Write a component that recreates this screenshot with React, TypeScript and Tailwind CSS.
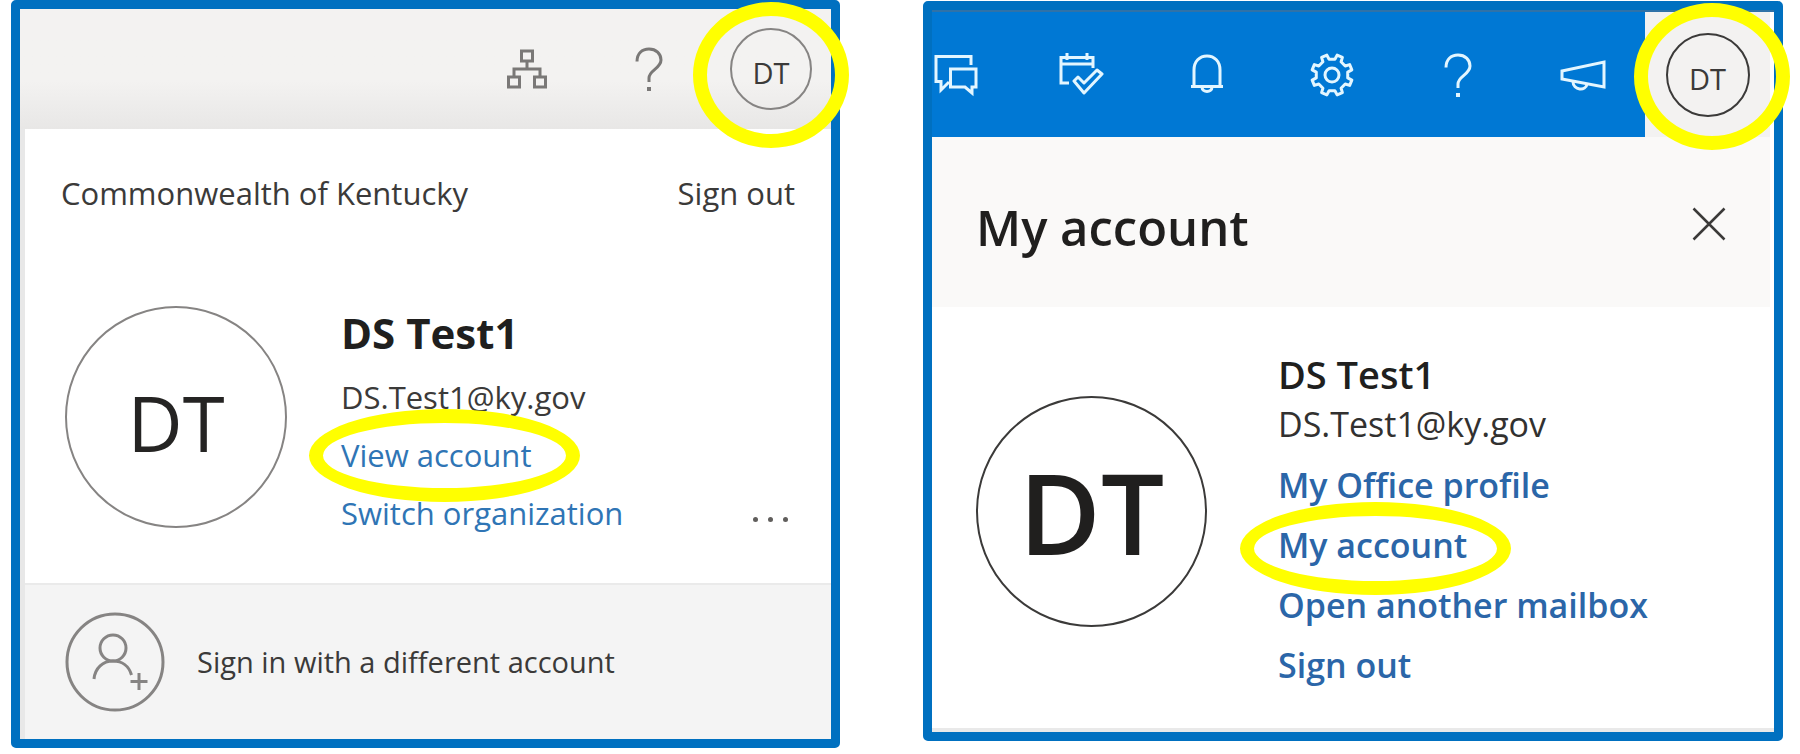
import React from "react";

type IconProps = { children: React.ReactNode; stroke?: string };

function Icon({ children, stroke = "3" }: IconProps) {
  return (
    <svg
      viewBox="0 0 46 46"
      className="size-[46px]"
      fill="none"
      stroke="currentColor"
      strokeWidth={stroke}
      aria-hidden="true"
    >
      {children}
    </svg>
  );
}

function Question() {
  return (
    <Icon>
      <path d="M11 15.500C11 7.500 16 3 23 3S35 7.500 35 14c0 8.500-12 10-12 18v4" />
      <path d="M23 41v4" strokeWidth="4" />
    </Icon>
  );
}

// Outline of an eight-toothed gear centred on (23, 23).
const gearPoints = Array.from({ length: 8 }, (_, tooth) =>
  [
    [-12, 16],
    [-8, 20.5],
    [8, 20.5],
    [12, 16],
  ]
    .map(([offset, radius]) => {
      const angle = ((tooth * 45 + 22.5 + offset) * Math.PI) / 180;
      return `${(23 + radius * Math.cos(angle)).toFixed(2)},${(23 + radius * Math.sin(angle)).toFixed(2)}`;
    })
    .join(" "),
).join(" ");

const toolbar = [
  {
    label: "Chat",
    icon: (
      <Icon>
        <path d="M38 13V4.500H3v25h5V38l8-8" />
        <path d="M17.500 17H43v18h-4v6l-7-6H17.500z" />
      </Icon>
    ),
  },
  {
    label: "Tasks",
    icon: (
      <Icon>
        <path d="M11 31H3V5.500h32V16M3 12h32M9 1v7M29 1v7" />
        <path d="m16 29 4-4 6 6 13-13 5 4-18 19z" strokeLinejoin="round" />
      </Icon>
    ),
  },
  {
    label: "Notifications",
    icon: (
      <Icon>
        <path d="M7 34.500h32M10 34V18C10 9.500 15.500 4 23 4s13 5.500 13 14v16" />
        <path d="M18 35c0 6 10 6 10 0" />
      </Icon>
    ),
  },
  {
    label: "Settings",
    icon: (
      <Icon>
        <circle cx="23" cy="23" r="7" />
        <polygon points={gearPoints} strokeLinejoin="round" />
      </Icon>
    ),
  },
  { label: "Help", icon: <Question /> },
  {
    label: "What's new",
    icon: (
      <Icon>
        <path d="m2 19 42-9v25L2 27z" />
        <path d="M13 29.500c0 9 13 10 14 2.500" />
      </Icon>
    ),
  },
];

const links = ["My Office profile", "My account", "Open another mailbox", "Sign out"];

function Highlight({ className }: { className: string }) {
  return (
    <span
      aria-hidden="true"
      className={`pointer-events-none absolute z-10 rounded-[50%] border-[14px] border-[#ffff00] ${className}`}
    />
  );
}

function OfficePanel() {
  return (
    <section className="min-w-0 rounded-[5px] border-[9px] border-[#0070c0] bg-[#e8e8e8] text-[#3b3a39]">
      <header className="flex h-[120px] items-center justify-end gap-[40px] bg-linear-to-b from-[#f3f2f1] from-60% to-[#e8e7e6] pr-[19px] text-[#7a7877]">
        <button aria-label="Organization" className="flex size-[82px] items-center justify-center">
          <Icon>
            <path d="M17.500 5h11v10h-11zM4.500 31h11v10h-11zM30.500 31h11v10h-11zM23 15v8M10 31v-8h26v8" />
          </Icon>
        </button>
        <button aria-label="Help" className="flex size-[82px] items-center justify-center">
          <Question />
        </button>
        <button
          aria-label="Account DT"
          className="relative flex size-[82px] items-center justify-center rounded-full border-2 border-[#868483] pt-2 text-[29px] leading-[36px] text-[#3b3a39]"
        >
          DT
          <Highlight className="-top-7 -left-[39px] h-[146px] w-[156px]" />
        </button>
      </header>
      <div className="ml-[5px] bg-white pb-[41px]">
        <div className="flex justify-between pt-[44px] pr-[36px] pl-[36px] text-[31px] leading-[40px]">
          <span>Commonwealth of Kentucky</span>
          <button>Sign out</button>
        </div>
        <div className="flex pt-[85px] pr-[43px] pl-[40px]">
          <div className="mt-2 flex size-[222px] shrink-0 items-center justify-center rounded-full border-2 border-[#868483] pt-3 text-[76px] leading-[90px] text-[#252423]">
            DT
          </div>
          <div className="ml-[54px] flex flex-1 flex-col items-start text-[31px] leading-[58px]">
            <h2 className="text-[42px] leading-[70px] font-bold text-[#201f1e]">DS Test1</h2>
            <span>DS.Test1@ky.gov</span>
            <a href="#view-account" className="relative text-[#2f75b5]">
              View account
              <Highlight className="-top-[17px] -left-8 h-[93px] w-[271px]" />
            </a>
            <div className="flex w-full items-center justify-between">
              <a href="#switch-organization" className="text-[#2f75b5]">
                Switch organization
              </a>
              <button aria-label="More options" className="flex gap-[10px] pt-3">
                <span className="size-[5px] rounded-full bg-[#605e5c]" />
                <span className="size-[5px] rounded-full bg-[#605e5c]" />
                <span className="size-[5px] rounded-full bg-[#605e5c]" />
              </button>
            </div>
          </div>
        </div>
      </div>
      <button className="ml-[5px] flex h-[156px] w-[calc(100%-5px)] items-center gap-[32px] border-t-2 border-[#eaeaea] bg-[#f4f4f4] pl-[40px] text-left text-[29px] leading-[40px]">
        <svg viewBox="0 0 100 100" className="size-[100px]" fill="none" stroke="#868483" strokeWidth="3" aria-hidden="true">
          <circle cx="50" cy="50" r="48" />
          <circle cx="48" cy="36" r="13" />
          <path d="M29 67c1-11 9-18 19-18 9 0 16 5 18.500 14M74 61v17M65.500 69.500h17" />
        </svg>
        <span>Sign in with a different account</span>
      </button>
    </section>
  );
}

function OutlookPanel() {
  return (
    <section className="mt-px min-w-0 rounded-[5px] border-[9px] border-[#0070c0] bg-white text-[#323130]">
      <header className="flex h-[127px] border-t-2 border-[#2f72a8] pr-1">
        <nav aria-label="Toolbar" className="flex flex-1 items-center justify-between bg-[#0078d4] pr-[39px] pl-px text-[#e3f6ff]">
          {toolbar.map((item) => (
            <button key={item.label} aria-label={item.label}>
              {item.icon}
            </button>
          ))}
        </nav>
        <div className="flex w-[125px] items-center justify-center bg-[#f3f2f1]">
          <button
            aria-label="Account DT"
            className="relative flex size-[84px] items-center justify-center rounded-full border-2 border-[#3b3a39] pt-2 text-[29px] leading-[36px] text-[#3b3a39]"
          >
            DT
            <Highlight className="-top-8 -left-[34px] h-[147px] w-[156px]" />
          </button>
        </div>
      </header>
      <div className="mr-1 flex items-start justify-between bg-[#faf9f8] pt-[58px] pr-[44px] pb-[48px] pl-[44px]">
        <h2 className="text-[49px] leading-[64px] font-semibold text-[#201f1e]">My account</h2>
        <button aria-label="Close" className="pt-[12px]">
          <svg viewBox="0 0 34 34" className="size-[34px]" fill="none" stroke="#3b3a39" strokeWidth="2.500" aria-hidden="true">
            <path d="m1.500 1.500 31 31M32.500 1.500l-31 31" />
          </svg>
        </button>
      </div>
      <div className="flex border-b-4 border-[#e9e9e9] pt-[42px] pb-[33px] pl-[44px]">
        <div className="mt-[47px] flex size-[231px] shrink-0 items-center justify-center rounded-full border-2 border-[#3b3a39] text-[112px] leading-[120px] font-semibold text-[#201f1e]">
          DT
        </div>
        <div className="ml-[71px] flex flex-col items-start text-[34px] leading-[50px]">
          <h3 className="text-[38px] font-semibold text-[#201f1e]">DS Test1</h3>
          <span>DS.Test1@ky.gov</span>
          <ul className="pt-[6px] leading-[60px] font-semibold text-[#2b66a8]">
            {links.map((label) => (
              <li key={label}>
                <a href={`#${label.toLowerCase().replace(/ /g, "-")}`} className="relative inline-block">
                  {label}
                  {label === "My account" && (
                    <Highlight className="-top-[13px] -left-[38px] h-[93px] w-[271px]" />
                  )}
                </a>
              </li>
            ))}
          </ul>
        </div>
      </div>
    </section>
  );
}

export default function App() {
  return (
    <main className="grid min-h-screen grid-cols-[829fr_860fr] items-start gap-[83px] bg-white pr-[17px] pl-[11px] font-['Open_Sans',sans-serif]">
      <OfficePanel />
      <OutlookPanel />
    </main>
  );
}
